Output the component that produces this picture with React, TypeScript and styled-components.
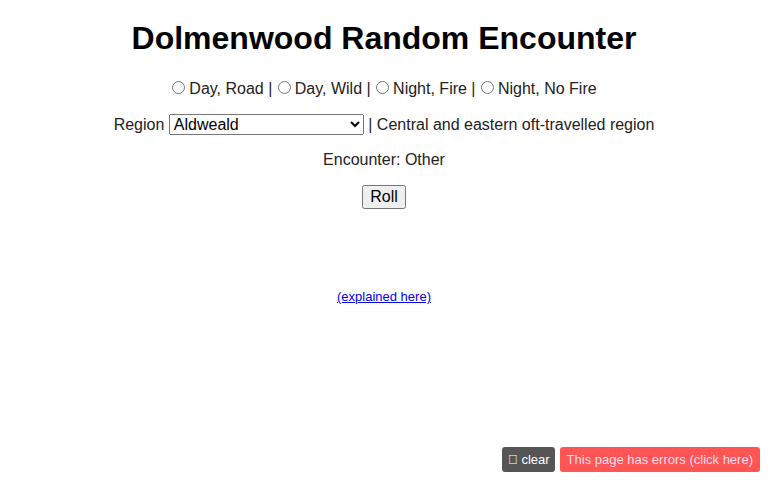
import React, { useState } from 'react'
import styled, { createGlobalStyle } from 'styled-components'

const regions = [
  { name: 'Aldweald', blurb: 'Central and eastern oft-travelled region' },
  { name: 'Aquatic', blurb: 'Rivers, lakes and marshes' },
  { name: 'Hag\'s Addle', blurb: 'Boggy lands of the hag' },
  { name: 'Mulchgrove', blurb: 'Dank, fungus-choked woods' },
  { name: 'Northern Scratch', blurb: 'Wild northern reaches' },
  { name: 'Tithelands', blurb: 'Settled farmlands of the west' },
]

const times = ['Day, Road', 'Day, Wild', 'Night, Fire', 'Night, No Fire']

const App = () => {
  const [region, setRegion] = useState(regions[0].name)
  const [time, setTime] = useState('')
  const current = regions.find(r => r.name === region) || regions[0]

  return (
    <>
      <Global />
      <Page>
        <Title>Dolmenwood Random Encounter</Title>
        <Row>
          {times.map((t, i) => (
            <React.Fragment key={t}>
              <label>
                <Radio type="radio" name="time" checked={time === t} onChange={() => setTime(t)} />
                {t}
              </label>
              {i < times.length - 1 ? ' | ' : ''}
            </React.Fragment>
          ))}
        </Row>
        <Row>
          Region{' '}
          <Select value={region} onChange={e => setRegion(e.target.value)}>
            {regions.map(r => (
              <option key={r.name}>{r.name}</option>
            ))}
          </Select>{' '}
          | {current.blurb}
        </Row>
        <Row>Encounter: Other</Row>
        <Row>
          <Roll>Roll</Roll>
        </Row>
        <Result />
        <Row>
          <Small>
            <Link href="#">(explained here)</Link>
          </Small>
        </Row>
      </Page>
      <Tray>
        <ClearButton>{'\uf1f8'} clear</ClearButton>
        <ErrorButton>This page has errors (click here)</ErrorButton>
      </Tray>
    </>
  )
}

export default App

const Global = createGlobalStyle`
  body {
    margin: 0;
    background: #fff;
    color: #222;
    font-family: "Liberation Sans", Arial, sans-serif;
    font-size: 16px;
  }
`
const Page = styled.div`
  text-align: center;
`
const Title = styled.h1`
  font-size: 32px;
  margin: 20px 0 21px;
  color: #000;
`
const Row = styled.p`
  margin: 16px 0;
`
const Radio = styled.input`
  margin: 3px 4px 0 1px;
`
const Small = styled.small`
  font-size: 13px;
`
const Select = styled.select`
  width: 195px;
  font-family: "Liberation Sans", Arial, sans-serif;
  font-size: 16px;
`
const Roll = styled.button`
  font-family: "Liberation Sans", Arial, sans-serif;
  font-size: 16px;
  padding: 1px 6px;
`
const Result = styled.div`
  height: 46px;
`
const Link = styled.a`
  color: #0000ee;
`
const Tray = styled.div`
  position: fixed;
  right: 8px;
  bottom: 8px;
  display: flex;
  gap: 5px;
`
const TrayButton = styled.div`
  height: 25px;
  padding: 0 7px;
  display: flex;
  align-items: center;
  border-radius: 3px;
  font-size: 13px;
  color: #fff;
  font-family: "Liberation Sans", Arial, sans-serif;
`
const ClearButton = styled(TrayButton)`
  background: #555;
  padding: 0 5px 0 6px;
`
const ErrorButton = styled(TrayButton)`
  background: #f55;
  color: #fde;
`
